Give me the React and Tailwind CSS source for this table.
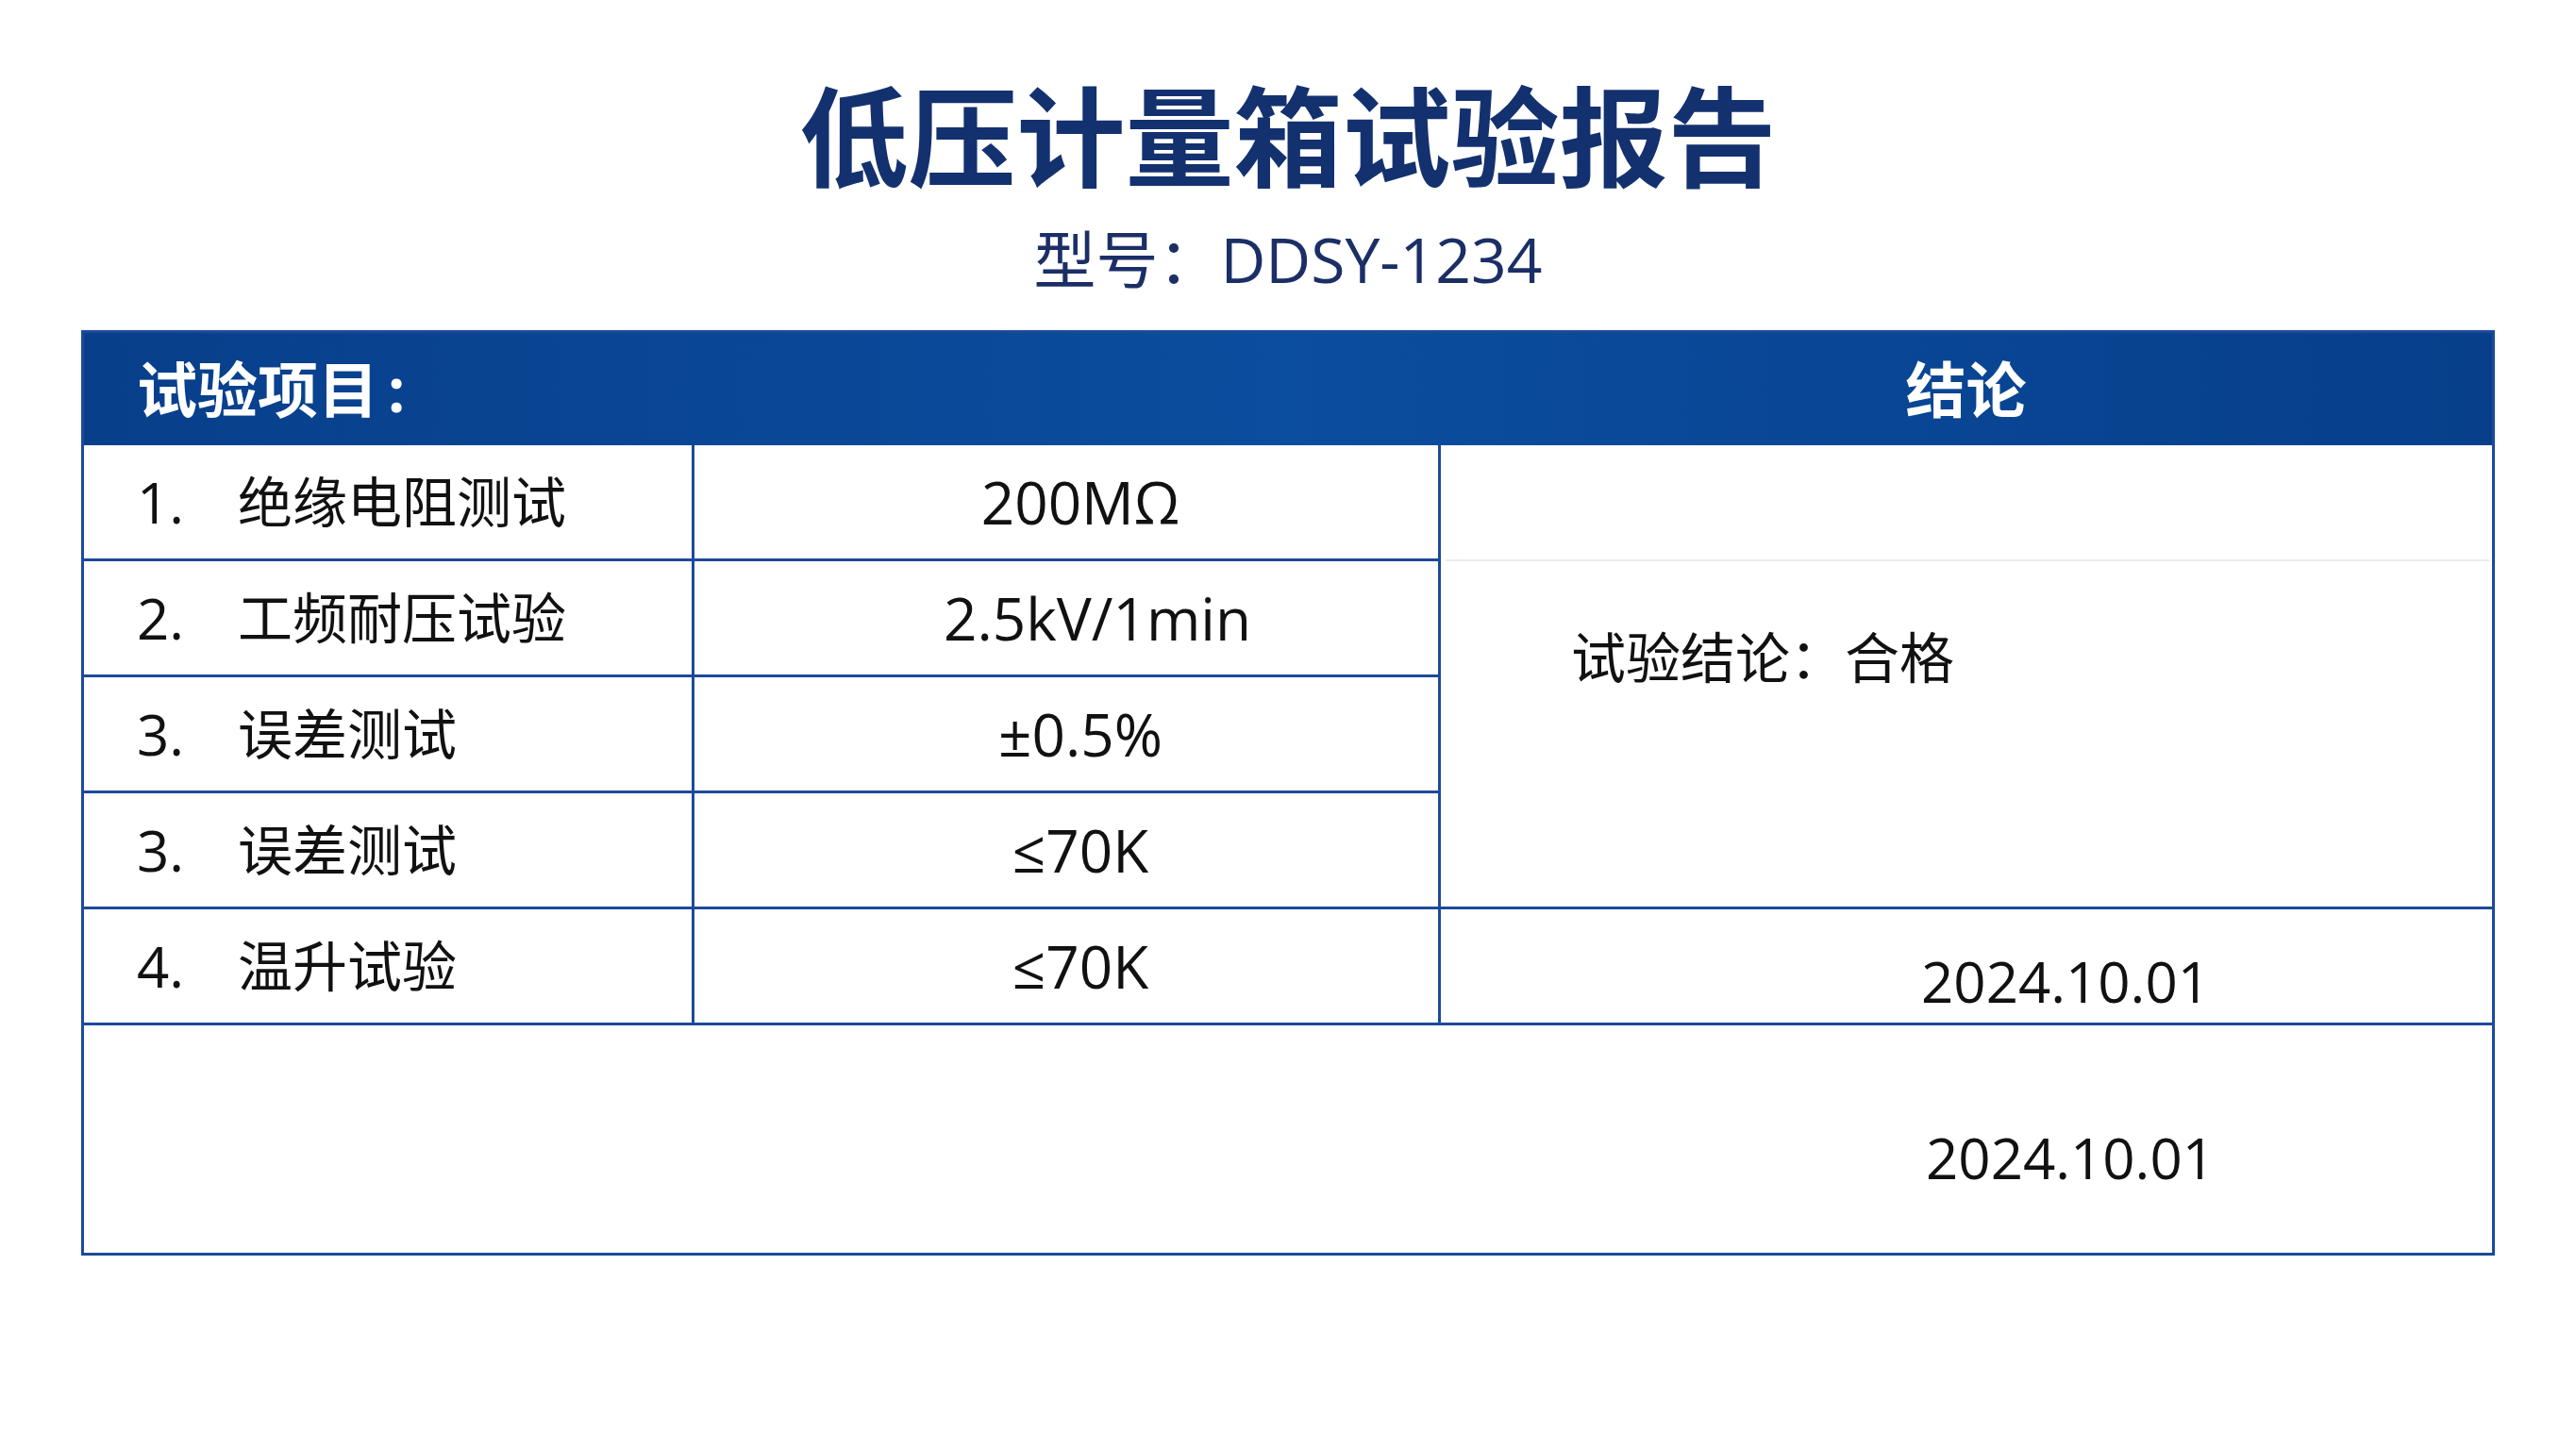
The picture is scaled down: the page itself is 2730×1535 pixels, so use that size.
import React from "react";

const font = { fontFamily: '"Open Sans", "Noto Sans CJK SC", sans-serif' };

const rows = [
  { n: "1.", name: "绝缘电阻测试", val: "200MΩ", pl: "pl-[30px]" },
  { n: "2.", name: "工频耐压试验", val: "2.5kV/1min", pl: "pl-[66px]" },
  { n: "3.", name: "误差测试", val: "±0.5%", pl: "pl-[30px]" },
  { n: "3.", name: "误差测试", val: "≤70K", pl: "pl-[30px]" },
  { n: "4.", name: "温升试验", val: "≤70K", pl: "pl-[30px]" },
];

export default function App() {
  return (
    <div
      className="w-[2730px] h-[1535px] bg-white overflow-hidden"
      style={font}
    >
      <h1
        className="pt-[80px] text-center text-[115px] leading-[118px] font-bold text-[#14316f]"
        style={{ fontFamily: '"Noto Sans CJK SC", sans-serif' }}
      >
        低压计量箱试验报告
      </h1>
      <div className="mt-[44px] text-center text-[66px] leading-[64px] text-[#1b2f66]">
        型号：DDSY-1234
      </div>

      <div className="mx-[86px] mt-[44px] border-[3px] border-[#1c4a9b]">
        <div className="h-[119px] flex items-center text-white font-bold text-[64px] leading-[64px] bg-gradient-to-r from-[#083f8b] via-[#0b4d9e] to-[#073f8b]">
          <div className="w-[1437px] pl-[56px]">
            试验项目<span className="ml-[10px]">:</span>
          </div>
          <div className="flex-1 text-center">结论</div>
        </div>

        <div className="grid grid-cols-[647px_791px_1fr] grid-rows-[123px_123px_123px_123px_123px_241px] text-[58px] leading-[58px] text-[#111]">
          {rows.map((r, i) => (
            <React.Fragment key={i}>
              <div
                className="flex items-center pl-[56px] border-r-[3px] border-b-[3px] border-[#1c4a9b]"
                style={{ gridRow: i + 1, gridColumn: 1 }}
              >
                <span className="w-[107px] text-[60px]">{r.n}</span>
                <span>{r.name}</span>
              </div>
              <div
                className={`flex items-center justify-center ${r.pl} text-[62px] border-r-[3px] border-b-[3px] border-[#1c4a9b]`}
                style={{ gridRow: i + 1, gridColumn: 2 }}
              >
                {r.val}
              </div>
            </React.Fragment>
          ))}

          <div className="col-start-3 row-start-1 row-span-4 flex flex-col border-b-[3px] border-[#1c4a9b]">
            <div className="h-[123px] shrink-0 border-b-2 border-[#ebebeb] ml-[5px] mr-[3px]" />
            <div className="pt-[73px] pl-[138px]">试验结论：合格</div>
          </div>

          <div className="col-start-3 row-start-5 flex items-center justify-end pr-[299px] pt-[32px] text-[60px] border-b-[3px] border-[#1c4a9b]">
            2024.10.01
          </div>

          <div className="col-span-3 row-start-6 flex items-center justify-end pr-[294px] pt-[38px] text-[60px]">
            2024.10.01
          </div>
        </div>
      </div>
    </div>
  );
}
